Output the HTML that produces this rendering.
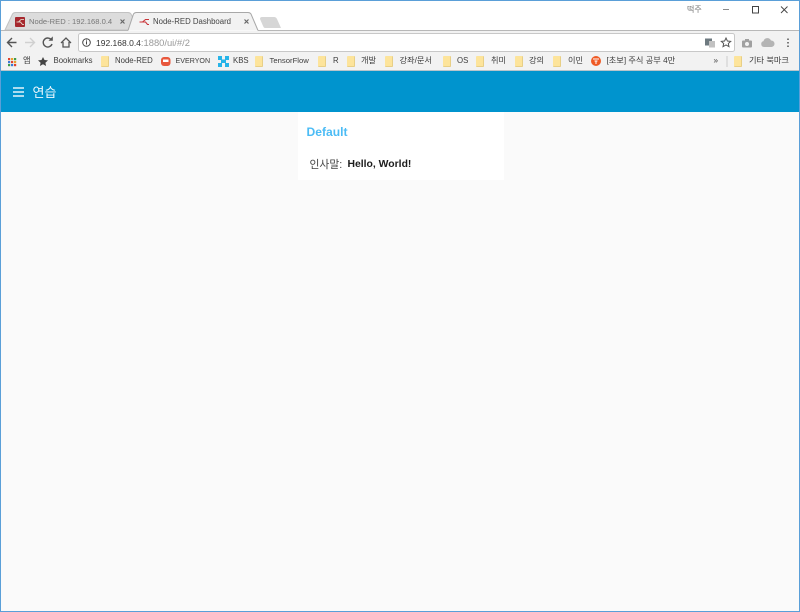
<!DOCTYPE html>
<html><head><meta charset="utf-8"><style>
html,body{margin:0;padding:0;width:800px;height:612px;overflow:hidden;background:#fafafa}
body{position:relative;font-family:"Liberation Sans","Noto Sans CJK KR",sans-serif}
.t{position:absolute;white-space:nowrap;font-size:7.8px;line-height:12px;color:#3c3c3c;filter:blur(.25px)}
.k{font-size:8.200px}
.f{position:absolute;top:56px;width:7px;height:10px;background:#fde49b;border:0 solid #e8cf86;border-width:0 1px 1px 0;border-radius:1px}
svg{position:absolute;left:0;top:0}
</style></head><body>
<div style="position:absolute;left:0;top:0;width:800px;height:31px;background:#fff"></div>
<div style="position:absolute;left:0;top:31px;width:800px;height:21px;background:#f2f2f2"></div>
<div style="position:absolute;left:0;top:52px;width:800px;height:19px;background:#f2f2f2"></div>
<div style="position:absolute;left:0;top:70px;width:800px;height:1px;background:#b9c4cb"></div>
<div style="position:absolute;left:0;top:71px;width:800px;height:41px;background:#0094ce"></div>
<div style="position:absolute;left:298px;top:112px;width:206px;height:68px;background:#fff"></div>
<svg width="800" height="612" viewBox="0 0 800 612" style="filter:blur(.2px)">
<path d="M5 30 L12.500 14 Q13.500 12.500 15.500 12.500 L128 12.500 Q130 12.500 131 14 L135 22 L130 30 Z" fill="#dcdcdc" stroke="#c2c2c2"/>
<path d="M0 30.500H128M258 30.500H800" stroke="#b8b8b8"/>
<path d="M128 30.500 L133.500 14 Q134.500 12.500 136.500 12.500 L248 12.500 Q250 12.500 251 14 L258 30.500 Z" fill="#f2f2f2"/>
<path d="M128 30.500 L133.500 14 Q134.500 12.500 136.500 12.500 L248 12.500 Q250 12.500 251 14 L258 30.500" fill="none" stroke="#a8a8a8"/>
<path d="M260 19 Q260 17 262 17 L274 17 Q276 17 277 19 L281 28 L265 28 Q264 28 263.500 27 Z" fill="#d6d6d6"/>
<rect x="15" y="17" width="10" height="10" rx="1" fill="#a6282e"/>
<path d="M16.500 22h2l2.500-2.500h3M18.500 22h2l2 2.500h1.500" stroke="#eed" stroke-width=".8" fill="none"/>
<path d="M139.500 22h3l3-2.500h3.500M142.500 22h3l2 2.500h1.500" stroke="#c9353a" stroke-width="1.100" fill="none"/>
<path d="M120.500 19.500l4 4m0-4l-4 4M244.500 19.500l4 4m0-4l-4 4" stroke="#666" stroke-width="1.200"/>
<path d="M723 9.500h6" stroke="#8a8a8a" stroke-width="1"/>
<rect x="752.500" y="6.500" width="6" height="6.500" fill="none" stroke="#444"/>
<path d="M781 6.500l6.500 6.500m0-6.500l-6.500 6.500" stroke="#444" stroke-width=".9"/>
<path d="M16.500 42.500H8M12 38l-4.500 4.500L12 47" fill="none" stroke="#555" stroke-width="1.400"/>
<path d="M25 42.500h9M30 38l4.500 4.500L30 47" fill="none" stroke="#d0d0d0" stroke-width="1.400"/>
<path d="M51.500 40A4.500 4.500 0 1 0 52 44" fill="none" stroke="#555" stroke-width="1.400"/>
<path d="M48.500 40.700h4.300v-4.300z" fill="#555"/>
<path d="M61 43l5-5 5 5M63 42v5h6v-5" fill="none" stroke="#555" stroke-width="1.300"/>
<rect x="78.500" y="33.500" width="656" height="18" rx="2" fill="#fff" stroke="#c8c8c8"/>
<circle cx="86.500" cy="42.500" r="3.800" fill="none" stroke="#444"/>
<path d="M86.500 41.200v3.300M86.500 39.800v.8" stroke="#444"/>
<rect x="705" y="38.500" width="7" height="7" fill="#6e7a80"/><rect x="709" y="41" width="6" height="6.500" fill="#c2c2c2"/>
<path d="M726 38l1.400 3 3.300.4-2.400 2.100.7 3.200-3-1.700-3 1.700.7-3.200-2.400-2.100 3.300-.4z" fill="none" stroke="#555"/>
<rect x="742" y="40.500" width="10" height="7" rx="1" fill="#a0a0a0"/><rect x="745" y="39" width="4" height="2" fill="#a0a0a0"/><circle cx="747" cy="44" r="2" fill="#f2f2f2"/>
<path d="M764 47a3 3 0 0 1-.5-5.900a4 4 0 0 1 7.500-.6a3.200 3.200 0 0 1 .5 6.500z" fill="#b4b4b4"/>
<path d="M788 38.500v1.500M788 42v1.500M788 45.500v1.500" stroke="#666" stroke-width="1.700"/>
<g><rect x="8" y="58" width="2.200" height="2.200" fill="#e0442e"/><rect x="11" y="58" width="2.200" height="2.200" fill="#e8a22c"/><rect x="14" y="58" width="2.200" height="2.200" fill="#3d9c4a"/><rect x="8" y="61" width="2.200" height="2.200" fill="#3a78d8"/><rect x="11" y="61" width="2.200" height="2.200" fill="#e0442e"/><rect x="14" y="61" width="2.200" height="2.200" fill="#e8a22c"/><rect x="8" y="64" width="2.200" height="2.200" fill="#3d9c4a"/><rect x="11" y="64" width="2.200" height="2.200" fill="#3a78d8"/><rect x="14" y="64" width="2.200" height="2.200" fill="#e0442e"/></g>
<path d="M43 57l1.500 3 3.500.4-2.600 2.300.7 3.300-3.100-1.700-3.100 1.700.7-3.300-2.600-2.300 3.500-.4z" fill="#444"/>
<rect x="161" y="57" width="9.500" height="9" rx="3" fill="#e8573c"/><rect x="163" y="59.500" width="5.500" height="2.500" fill="#fff"/>
<g fill="#27b4e8"><rect x="218" y="56" width="4" height="4"/><rect x="225" y="56" width="4" height="4"/><rect x="221" y="59.500" width="5" height="3.500"/><rect x="218" y="63" width="4" height="4"/><rect x="225" y="63" width="4" height="4"/></g>
<circle cx="596" cy="61" r="5" fill="#ef5a24"/><path d="M593 59h6M594.500 61h3M596 61v3" stroke="#fff"/>
<path d="M727 56v11" stroke="#ccc"/>
<path d="M13 88h11M13 92h11M13 96h11" stroke="#fff" stroke-width="1.400" opacity=".9"/>
<rect x="0.500" y="0.500" width="799" height="611" fill="none" stroke="#5a9fd8"/>
</svg>
<div class="f" style="left:101px"></div><div class="f" style="left:255px"></div><div class="f" style="left:318px"></div><div class="f" style="left:347px"></div><div class="f" style="left:385px"></div><div class="f" style="left:443px"></div><div class="f" style="left:476px"></div><div class="f" style="left:515px"></div><div class="f" style="left:553px"></div><div class="f" style="left:734px"></div>
<div class="t" style="left:29px;top:15.500px;font-size:7.600px;color:#777">Node-RED : 192.168.0.4</div>
<div class="t" style="left:153px;top:15.500px;color:#444">Node-RED Dashboard</div>
<div class="t" style="left:687px;top:3.500px;color:#777;font-size:8px">떡주</div>
<div class="t" style="left:96px;top:36.500px;font-size:8.500px;color:#333">192.168.0.4<span style="color:#999;font-size:9.400px">:1880/ui/#/2</span></div>
<div class="t k" style="left:23px;top:55px">앱</div>
<div class="t" style="left:53.500px;top:55px">Bookmarks</div>
<div class="t" style="left:115px;top:55px">Node-RED</div>
<div class="t" style="left:175.500px;top:55px;font-size:7.100px">EVERYON</div>
<div class="t" style="left:233px;top:55px">KBS</div>
<div class="t" style="left:269.500px;top:55px;font-size:7.700px">TensorFlow</div>
<div class="t" style="left:333px;top:55px">R</div>
<div class="t k" style="left:361px;top:55px">개발</div>
<div class="t k" style="left:399.500px;top:55px">강좌/문서</div>
<div class="t" style="left:457px;top:55px">OS</div>
<div class="t k" style="left:491px;top:55px">취미</div>
<div class="t k" style="left:529px;top:55px">강의</div>
<div class="t k" style="left:568px;top:55px">이민</div>
<div class="t k" style="left:606.500px;top:55px">[초보] 주식 공부 4만</div>
<div class="t k" style="left:713.500px;top:55px">»</div>
<div class="t k" style="left:749px;top:55px">기타 북마크</div>
<div class="t" style="left:32.500px;top:84px;font-size:13px;line-height:17px;color:#eef8fd">연습</div>
<div class="t" style="left:306.500px;top:124px;font-size:12.100px;line-height:16px;font-weight:bold;color:#4cbcf5">Default</div>
<div class="t" style="left:309.500px;top:158px;font-size:10.800px;line-height:14px;color:#444">인사말:</div>
<div class="t" style="left:347.500px;top:158px;font-size:10.400px;line-height:14px;font-weight:bold;color:#1d1d1d">Hello, World!</div>
</body></html>
